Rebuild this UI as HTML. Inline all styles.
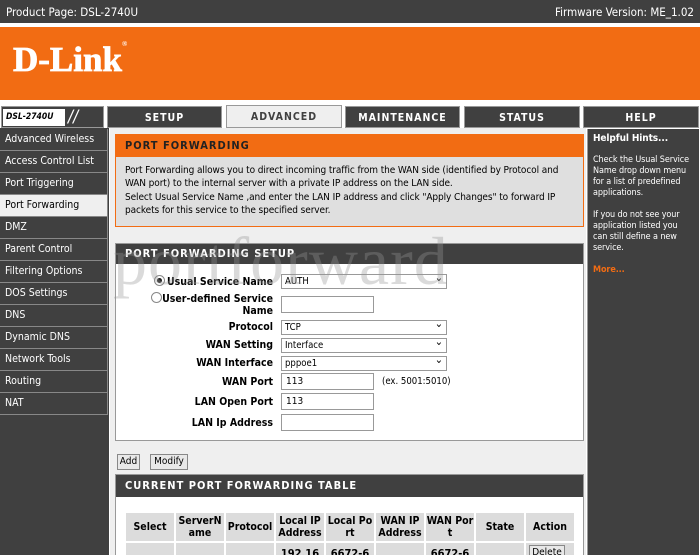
<!DOCTYPE html>
<html><head><meta charset="utf-8">
<style>
*{margin:0;padding:0;box-sizing:border-box}
html,body{width:700px;height:555px;overflow:hidden}
body{background:#fff;font-family:"DejaVu Sans Condensed","Liberation Sans",sans-serif;font-size:11px;color:#000;position:relative}
.a{position:absolute}
.top{left:0;top:0;width:700px;height:23px;background:#404040;color:#fff;font-size:11.5px}
.orange{left:0;top:27px;width:700px;height:73px;background:#f26c13}
.tab{top:106px;height:22px;background:#404040;color:#fff;font-weight:bold;font-size:10.5px;text-align:center;line-height:22px;letter-spacing:1px;border:1px solid #999}
.side{left:0;width:108px;height:22px;background:#404040;color:#fff;font-size:10.5px;line-height:21px;padding-left:5px;border-bottom:1px solid #888;border-right:1px solid #888}
.main{left:110px;top:128px;width:476px;height:427px;background:#efefef}
.hdr{color:#fff;font-weight:bold;font-size:11px;letter-spacing:1px;padding-left:9px;line-height:21px}
.lbl{font-weight:bold;font-size:10.5px;text-align:right;width:160px}
.sel{height:15px;border:1px solid #999;background:#fff;font-size:9.5px;padding-left:3px;line-height:13px}
.sel:after{content:"\2304";position:absolute;right:3px;top:-4px;font-size:11px}
.inp{height:17px;border:1px solid #999;background:#fff;font-size:10px;padding-left:4px;line-height:15px}
.btn{height:16px;border:1px solid #888;background:#e8e8e8;font-size:10px;line-height:14px;text-align:center}
.th{top:513px;width:48px;height:28px;background:#dcdcdc;font-weight:bold;font-size:10.5px;text-align:center;line-height:12px;display:flex;align-items:center;justify-content:center}
.td{top:543px;width:48px;height:12px;background:#dcdcdc;font-weight:bold;font-size:11px;text-align:center;line-height:22px;overflow:hidden}
</style></head><body>
<div class="a top"><span class="a" style="left:6px;top:5px">Product Page: DSL-2740U</span><span class="a" style="right:6px;top:5px">Firmware Version: ME_1.02</span></div>
<div class="a orange"><div class="a" style="left:13px;top:13px;color:#fff;font-family:'Liberation Serif',serif;font-weight:bold;font-size:35px;letter-spacing:0px;-webkit-text-stroke:0.8px #fff">D-Link<span style="font-size:7px;vertical-align:top;-webkit-text-stroke:0">®</span></div></div>
<div class="a" style="left:0;top:100px;width:700px;height:6px;background:#fff"></div>
<div class="a" style="left:1px;top:106px;width:103px;height:22px;background:#404040;border:1px solid #999"><div class="a" style="left:1px;top:2px;width:62px;height:17px;background:#fff;font-style:italic;font-weight:bold;font-size:8.5px;line-height:17px;padding-left:3px">DSL-2740U</div><div class="a" style="left:66px;top:1px;color:#fff;font-size:17px;line-height:18px;font-style:italic">//</div></div>
<div class="a tab" style="left:107px;width:115px">SETUP</div>
<div class="a tab" style="left:226px;top:105px;height:23px;width:116px;background:#efefef;color:#404040">ADVANCED</div>
<div class="a tab" style="left:345px;width:115px">MAINTENANCE</div>
<div class="a tab" style="left:464px;width:116px">STATUS</div>
<div class="a tab" style="left:583px;width:116px">HELP</div>
<div class="a" style="left:0;top:128px;width:109px;height:427px;background:#404040"></div>
<div class="a side" style="top:129px">Advanced Wireless</div>
<div class="a side" style="top:151px">Access Control List</div>
<div class="a side" style="top:173px">Port Triggering</div>
<div class="a side" style="top:195px;background:#efefef;color:#000">Port Forwarding</div>
<div class="a side" style="top:217px">DMZ</div>
<div class="a side" style="top:239px">Parent Control</div>
<div class="a side" style="top:261px">Filtering Options</div>
<div class="a side" style="top:283px">DOS Settings</div>
<div class="a side" style="top:305px">DNS</div>
<div class="a side" style="top:327px">Dynamic DNS</div>
<div class="a side" style="top:349px">Network Tools</div>
<div class="a side" style="top:371px">Routing</div>
<div class="a side" style="top:393px">NAT</div>
<div class="a main"></div>
<div class="a" style="left:115px;top:134px;width:469px;height:93px;background:#dfdfdf;border:1px solid #f26c13">
<div class="hdr" style="background:#f26c13;color:#222;height:22px">PORT FORWARDING</div>
<div style="padding:7px 9px;font-size:10px;line-height:13.3px;letter-spacing:-0.1px">Port Forwarding allows you to direct incoming traffic from the WAN side (identified by Protocol and WAN port) to the internal server with a private IP address on the LAN side.<br>Select Usual Service Name ,and enter the LAN IP address and click "Apply Changes" to forward IP packets for this service to the specified server.</div></div>
<div class="a" style="left:115px;top:243px;width:469px;height:198px;background:#fff;border:1px solid #999">
<div class="hdr" style="background:#404040;height:20px;line-height:20px">PORT FORWARDING SETUP</div></div>
<div class="a" style="left:154px;top:275px;width:11px;height:11px;border:1px solid #888;border-radius:50%;background:#fff"><div class="a" style="left:2px;top:2px;width:5px;height:5px;border-radius:50%;background:#222"></div></div>
<div class="a" style="left:151px;top:292px;width:11px;height:11px;border:1px solid #888;border-radius:50%;background:#fff"></div>
<div class="a lbl" style="left:113px;top:276px">Usual Service Name</div>
<div class="a lbl" style="left:113px;top:293px;line-height:12px">User-defined Service<br>Name</div>
<div class="a lbl" style="left:113px;top:321px">Protocol</div>
<div class="a lbl" style="left:113px;top:339px">WAN Setting</div>
<div class="a lbl" style="left:113px;top:357px">WAN Interface</div>
<div class="a lbl" style="left:113px;top:376px">WAN Port</div>
<div class="a lbl" style="left:113px;top:396px">LAN Open Port</div>
<div class="a lbl" style="left:113px;top:417px">LAN Ip Address</div>
<div class="a sel" style="left:281px;top:274px;width:166px">AUTH</div>
<div class="a inp" style="left:281px;top:296px;width:93px"></div>
<div class="a sel" style="left:281px;top:320px;width:166px">TCP</div>
<div class="a sel" style="left:281px;top:338px;width:166px">Interface</div>
<div class="a sel" style="left:281px;top:356px;width:166px">pppoe1</div>
<div class="a inp" style="left:281px;top:373px;width:93px">113</div>
<div class="a" style="left:382px;top:376px;font-size:9.5px">(ex. 5001:5010)</div>
<div class="a inp" style="left:281px;top:393px;width:93px">113</div>
<div class="a inp" style="left:281px;top:414px;width:93px"></div>
<div class="a" style="left:113px;top:222px;font-family:'Liberation Serif',serif;font-size:68px;color:rgba(150,150,150,0.35);letter-spacing:1px">portforward</div>
<div class="a btn" style="left:117px;top:454px;width:23px">Add</div>
<div class="a btn" style="left:150px;top:454px;width:38px">Modify</div>
<div class="a" style="left:115px;top:474px;width:469px;height:81px;background:#fff;border:1px solid #999;border-bottom:none">
<div class="hdr" style="background:#404040;height:22px;line-height:22px">CURRENT PORT FORWARDING TABLE</div></div>
<div class="a th" style="left:126px">Select</div>
<div class="a th" style="left:176px">ServerN<br>ame</div>
<div class="a th" style="left:226px">Protocol</div>
<div class="a th" style="left:276px">Local IP<br>Address</div>
<div class="a th" style="left:326px">Local Po<br>rt</div>
<div class="a th" style="left:376px">WAN IP<br>Address</div>
<div class="a th" style="left:426px">WAN Por<br>t</div>
<div class="a th" style="left:476px">State</div>
<div class="a th" style="left:526px">Action</div>
<div class="a td" style="left:126px"></div><div class="a td" style="left:176px"></div><div class="a td" style="left:226px"></div>
<div class="a td" style="left:276px">192.16</div><div class="a td" style="left:326px">6672-6</div><div class="a td" style="left:376px"></div>
<div class="a td" style="left:426px">6672-6</div><div class="a td" style="left:476px"></div>
<div class="a td" style="left:526px"><div class="a btn" style="left:3px;top:2px;width:36px;font-weight:normal;font-size:10px">Delete</div></div>
<div class="a" style="left:587px;top:129px;width:112px;height:426px;background:#404040;color:#fff;border-left:1px solid #999;padding:4px 5px;font-size:9px;line-height:11px;letter-spacing:-0.1px">
<div style="font-weight:bold;font-size:10px">Helpful Hints...</div><br>
<div>Check the Usual Service Name drop down menu for a list of predefined applications.</div><br>
<div>If you do not see your application listed you can still define a new service.</div><br>
<div style="color:#f26c13;font-weight:bold">More...</div></div>
</body></html>
